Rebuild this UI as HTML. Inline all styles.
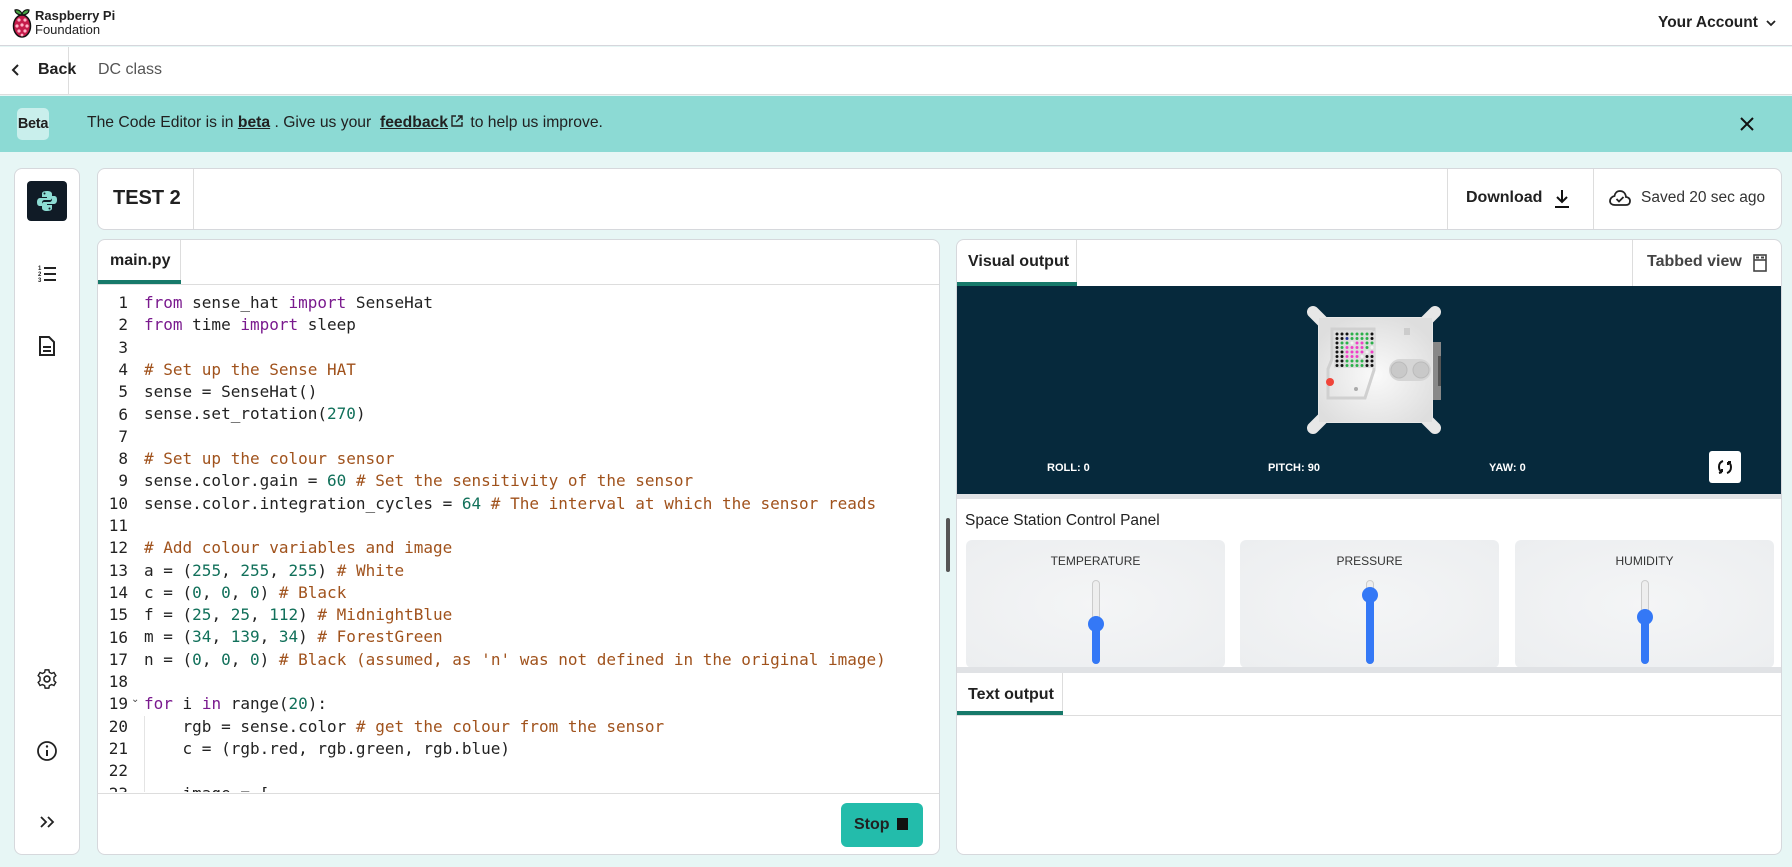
<!DOCTYPE html>
<html><head><meta charset="utf-8"><style>
*{box-sizing:border-box;margin:0;padding:0}
body{width:1792px;height:867px;overflow:hidden;background:#e7f6f5;font-family:"Liberation Sans",sans-serif;color:#212121;position:relative}
.a{position:absolute}
.code{font-family:"DejaVu Sans Mono","Liberation Mono",monospace;font-size:16px;line-height:22.3px;white-space:pre;color:#222}
.k{color:#7a1a8e}.c{color:#a0521c}.n{color:#11705a}
.ln{position:absolute;left:0;width:30px;text-align:right;color:#222}
.card{position:absolute;background:radial-gradient(ellipse at center,#f4f5f6 0%,#eceef0 100%);border-radius:6px;top:300px;height:128px;width:259px}
.card .t{position:absolute;top:14px;width:100%;text-align:center;font-size:12px;color:#333}
.trk{position:absolute;left:50%;margin-left:-4px;top:40px;width:8px;height:84px;border:1px solid #ccc;border-radius:4px;background:#eee}
.fill{position:absolute;left:50%;margin-left:-4px;width:8px;background:#3478f6;border-radius:4px;bottom:4px}
.knob{position:absolute;left:50%;margin-left:-8px;width:16px;height:16px;border-radius:50%;background:#3478f6}
</style></head><body>
<!-- header -->
<div class="a" style="left:0;top:0;width:1792px;height:46px;background:#fff;border-bottom:1px solid #d6d6dc"></div>
<svg class="a" style="left:12px;top:7px" width="20" height="32" viewBox="0 0 20 32">
<path d="M3 3 C6 2 9 4 10 7 C11 4 14 2 17 3 C17 6 14 8 10 8 C6 8 3 6 3 3Z" fill="#47a141" stroke="#111" stroke-width="1.2"/>
<ellipse cx="10" cy="19" rx="8.5" ry="11" fill="#c51a4a" stroke="#111" stroke-width="1.5"/>
<g fill="#ffb3c8"><circle cx="7" cy="13" r="1.6"/><circle cx="13" cy="13" r="1.6"/><circle cx="10" cy="18" r="1.6"/><circle cx="5" cy="19" r="1.6"/><circle cx="15" cy="19" r="1.6"/><circle cx="7" cy="24" r="1.6"/><circle cx="13" cy="24" r="1.6"/><circle cx="10" cy="28" r="1.4"/></g></svg>
<div class="a" style="left:35px;top:9px;font-size:13px;line-height:14px;font-weight:bold">Raspberry Pi</div>
<div class="a" style="left:35px;top:23px;font-size:13px;line-height:14px">Foundation</div>
<div class="a" style="left:1658px;top:14px;font-size:15.5px;font-weight:bold">Your Account</div>
<svg class="a" style="left:1765px;top:18px" width="12" height="10"><path d="M2 3 L6 7 L10 3" stroke="#222" stroke-width="1.8" fill="none"/></svg>
<!-- back bar -->
<div class="a" style="left:0;top:47px;width:1792px;height:48px;background:#fff;border-bottom:1px solid #ddd"></div>
<div class="a" style="left:68px;top:47px;width:1px;height:48px;background:#ddd"></div>
<svg class="a" style="left:10px;top:63px" width="12" height="14"><path d="M8 2 L3 7 L8 12" stroke="#222" stroke-width="2" fill="none"/></svg>
<div class="a" style="left:38px;top:61px;font-size:16px;font-weight:bold">Back</div>
<div class="a" style="left:98px;top:61px;font-size:16px;color:#555">DC class</div>
<!-- banner -->
<div class="a" style="left:0;top:96px;width:1792px;height:56px;background:#8cdad4"></div>
<div class="a" style="left:17px;top:108px;width:32px;height:32px;background:#c9efec;border-radius:5px;font-size:14.5px;font-weight:bold;text-align:center;line-height:32px;letter-spacing:-0.3px">Beta</div>
<div class="a" style="left:87px;top:114px;font-size:15.7px;white-space:nowrap">The Code Editor is in <b style="text-decoration:underline">beta</b> . Give us your &nbsp;<b style="text-decoration:underline">feedback</b><svg width="14" height="14" style="vertical-align:-1px;margin:0 2px"><path d="M6 2H2V12H12V8M8 2H12V6M12 2L6 8" stroke="#222" stroke-width="1.4" fill="none"/></svg> to help us improve.</div>
<svg class="a" style="left:1739px;top:116px" width="16" height="16"><path d="M2 2L14 14M14 2L2 14" stroke="#111" stroke-width="2"/></svg>
<!-- sidebar -->
<div class="a" style="left:14px;top:168px;width:66px;height:687px;background:#fff;border:1px solid #d6d8dc;border-radius:8px"></div>
<div class="a" style="left:27px;top:181px;width:40px;height:40px;background:#101b26;border-radius:4px"></div>
<svg class="a" style="left:35px;top:189px" width="24" height="24" viewBox="0 0 24 24"><path d="M12 2C7 2 7 4 7 5V8H12V9H5C3 9 2 11 2 13C2 16 3 17 5 17H7V14C7 12 8 11 10 11H15C16 11 17 10 17 9V5C17 3 15 2 12 2Z" fill="#8ddcd3"/><path d="M12 22C17 22 17 20 17 19V16H12V15H19C21 15 22 13 22 11C22 8 21 7 19 7H17V10C17 12 16 13 14 13H9C8 13 7 14 7 15V19C7 21 9 22 12 22Z" fill="#8ddcd3"/><circle cx="9.5" cy="4.5" r="1" fill="#101b26"/><circle cx="14.5" cy="19.5" r="1" fill="#101b26"/></svg>
<svg class="a" style="left:37px;top:264px" width="20" height="20"><g fill="#222"><rect x="7" y="3" width="12" height="2"/><rect x="7" y="9" width="12" height="2"/><rect x="7" y="15" width="12" height="2"/></g><g font-family="Liberation Sans" font-size="6" font-weight="bold" fill="#222"><text x="1" y="6">1</text><text x="1" y="12">2</text><text x="1" y="18">3</text></g></svg>
<svg class="a" style="left:38px;top:336px" width="18" height="20"><path d="M2 1H11L16 6V19H2Z" stroke="#222" stroke-width="2" fill="none"/><path d="M5 11H13M5 15H13" stroke="#222" stroke-width="2"/></svg>
<svg class="a" style="left:36px;top:668px" width="22" height="22" viewBox="0 0 24 24"><circle cx="12" cy="12" r="3.2" stroke="#222" stroke-width="1.8" fill="none"/><path d="M10 2H14L14.6 4.8L17 6L19.6 4.9L21.6 8.3L19.6 10.2V13.8L21.6 15.7L19.6 19.1L17 18L14.6 19.2L14 22H10L9.4 19.2L7 18L4.4 19.1L2.4 15.7L4.4 13.8V10.2L2.4 8.3L4.4 4.9L7 6L9.4 4.8Z" stroke="#222" stroke-width="1.6" fill="none"/></svg>
<svg class="a" style="left:36px;top:740px" width="22" height="22"><circle cx="11" cy="11" r="9" stroke="#222" stroke-width="1.8" fill="none"/><path d="M11 10V16" stroke="#222" stroke-width="2"/><circle cx="11" cy="6.5" r="1.2" fill="#222"/></svg>
<svg class="a" style="left:39px;top:815px" width="16" height="14"><path d="M2 2L7 7L2 12M9 2L14 7L9 12" stroke="#222" stroke-width="1.8" fill="none"/></svg>
<!-- title bar -->
<div class="a" style="left:97px;top:168px;width:1685px;height:62px;background:#fff;border:1px solid #d6d8dc;border-radius:8px"></div>
<div class="a" style="left:193px;top:169px;width:1px;height:60px;background:#ddd"></div>
<div class="a" style="left:1447px;top:169px;width:1px;height:60px;background:#ddd"></div>
<div class="a" style="left:1593px;top:169px;width:1px;height:60px;background:#ddd"></div>
<div class="a" style="left:113px;top:187px;font-size:20px;font-weight:bold">TEST 2</div>
<div class="a" style="left:1466px;top:189px;font-size:16px;font-weight:bold">Download</div>
<svg class="a" style="left:1553px;top:189px" width="18" height="20"><path d="M9 1V13M4 8L9 13L14 8M2 18H16" stroke="#111" stroke-width="2" fill="none"/></svg>
<svg class="a" style="left:1609px;top:188px" width="22" height="20" viewBox="0 0 22 20"><path d="M6 17H17C19.5 17 21 15.5 21 13C21 10.5 19 9 17 9C16.5 5 14 3 11 3C8 3 6 5 5.5 8C3 8.5 1 10.5 1 13C1 15.5 3 17 6 17Z" stroke="#222" stroke-width="1.8" fill="none"/><path d="M7.5 11L10 13.5L14.5 9" stroke="#222" stroke-width="1.8" fill="none"/></svg>
<div class="a" style="left:1641px;top:189px;font-size:15.5px;color:#333">Saved 20 sec ago</div>
<!-- editor panel -->
<div class="a" style="left:97px;top:239px;width:843px;height:616px;background:#fff;border:1px solid #d6d8dc;border-radius:8px;overflow:hidden">
 <div class="a" style="left:0;top:0;width:83px;height:44px;border-right:1px solid #ddd"></div>
 <div class="a" style="left:12px;top:12px;font-size:16px;font-weight:bold">main.py</div>
 <div class="a" style="left:0;top:40px;width:83px;height:4px;background:#17796a"></div>
 <div class="a" style="left:0;top:44px;width:843px;height:1px;background:#ddd"></div>
 <div class="a" style="left:0;top:553px;width:843px;height:1px;background:#ddd"></div>
 <div class="a" style="left:743px;top:563px;width:82px;height:44px;background:#23bcab;border-radius:6px;font-size:16px;font-weight:bold;line-height:44px;padding-left:13px">Stop <span style="display:inline-block;width:11px;height:12px;background:#111;vertical-align:-1px;margin-left:3px"></span></div>
 <div class="a" style="left:0;top:52px;width:843px;height:500px;overflow:hidden">
 <div class="code a" style="left:0;top:0;width:843px">
<span class="ln" style="top:0">1</span><span class="ln" style="top:22.3px">2</span><span class="ln" style="top:44.6px">3</span><span class="ln" style="top:66.9px">4</span><span class="ln" style="top:89.2px">5</span><span class="ln" style="top:111.5px">6</span><span class="ln" style="top:133.8px">7</span><span class="ln" style="top:156.1px">8</span><span class="ln" style="top:178.4px">9</span><span class="ln" style="top:200.7px">10</span><span class="ln" style="top:223px">11</span><span class="ln" style="top:245.3px">12</span><span class="ln" style="top:267.6px">13</span><span class="ln" style="top:289.9px">14</span><span class="ln" style="top:312.2px">15</span><span class="ln" style="top:334.5px">16</span><span class="ln" style="top:356.8px">17</span><span class="ln" style="top:379.1px">18</span><span class="ln" style="top:401.4px">19</span><span class="ln" style="top:423.7px">20</span><span class="ln" style="top:446px">21</span><span class="ln" style="top:468.3px">22</span><span class="ln" style="top:490.6px">23</span></div>
 <div class="code a" style="left:46px;top:0"><span class="k">from</span> sense_hat <span class="k">import</span> SenseHat
<span class="k">from</span> time <span class="k">import</span> sleep

<span class="c"># Set up the Sense HAT</span>
sense = SenseHat()
sense.set_rotation(<span class="n">270</span>)

<span class="c"># Set up the colour sensor</span>
sense.color.gain = <span class="n">60</span> <span class="c"># Set the sensitivity of the sensor</span>
sense.color.integration_cycles = <span class="n">64</span> <span class="c"># The interval at which the sensor reads</span>

<span class="c"># Add colour variables and image</span>
a = (<span class="n">255</span>, <span class="n">255</span>, <span class="n">255</span>) <span class="c"># White</span>
c = (<span class="n">0</span>, <span class="n">0</span>, <span class="n">0</span>) <span class="c"># Black</span>
f = (<span class="n">25</span>, <span class="n">25</span>, <span class="n">112</span>) <span class="c"># MidnightBlue</span>
m = (<span class="n">34</span>, <span class="n">139</span>, <span class="n">34</span>) <span class="c"># ForestGreen</span>
n = (<span class="n">0</span>, <span class="n">0</span>, <span class="n">0</span>) <span class="c"># Black (assumed, as 'n' was not defined in the original image)</span>

<span class="k">for</span> i <span class="k">in</span> range(<span class="n">20</span>):
    rgb = sense.color <span class="c"># get the colour from the sensor</span>
    c = (rgb.red, rgb.green, rgb.blue)

    image = [</div>
 <div class="a" style="left:33px;top:402px;font-size:10px;color:#444">⌄</div>
 <div class="a" style="left:46px;top:424px;width:1px;height:80px;background:#e4e4e4"></div>
 </div>
</div>
<div class="a" style="left:946px;top:518px;width:4px;height:54px;background:#555;border-radius:2px"></div>
<!-- output panel -->
<div class="a" style="left:956px;top:239px;width:826px;height:616px;background:#fff;border:1px solid #d6d8dc;border-radius:8px;overflow:hidden">
 <div class="a" style="left:0;top:0;width:120px;height:46px;border-right:1px solid #ddd"></div>
 <div class="a" style="left:11px;top:13px;font-size:16px;font-weight:bold">Visual output</div>
 <div class="a" style="left:0;top:42px;width:120px;height:4px;background:#17796a"></div>
 <div class="a" style="left:675px;top:0;width:1px;height:46px;background:#ddd"></div>
 <div class="a" style="left:690px;top:13px;font-size:16px;font-weight:bold;color:#444">Tabbed view</div>
 <svg class="a" style="left:796px;top:14px" width="14" height="18"><rect x="1" y="1" width="12" height="16" stroke="#444" stroke-width="1.6" fill="none"/><path d="M1 6H13" stroke="#444" stroke-width="1.6"/><rect x="3" y="2.5" width="3" height="2" fill="#444"/><rect x="8" y="2.5" width="3" height="2" fill="#444"/></svg>
 <div class="a" style="left:0;top:46px;width:826px;height:208px;background:#06293c"></div>
 <svg class="a" style="left:349px;top:65px" width="135" height="130" viewBox="1305 304 135 130">
  <g fill="#e7e7e7" stroke="#e7e7e7" stroke-width="12" stroke-linecap="round">
   <path d="M1312 311L1326 325M1434 311L1420 325M1312 427L1326 413M1434 427L1420 413"/>
  </g>
  <rect x="1317" y="316" width="115" height="106" rx="2" fill="#e7e7e7"/>
  <defs><radialGradient id="g" cx="0.5" cy="0.55" r="0.6"><stop offset="0" stop-color="#fafafa"/><stop offset="1" stop-color="#dedede"/></radialGradient></defs>
  <rect x="1318" y="317" width="113" height="104" fill="url(#g)"/>
  <rect x="1432" y="341" width="8" height="58" fill="#888"/><rect x="1437" y="355" width="3" height="30" fill="#555"/>
  <path d="M1331 328H1373V369L1364 397H1327V368L1331 358Z" fill="none" stroke="#d0d0d0" stroke-width="3"/>
  <rect x="1333" y="330" width="41" height="37" fill="#ddd"/>
  <g id="leds"></g>
  <rect x="1403" y="327" width="6" height="7" fill="#ccc"/>
  <rect x="1388" y="358" width="42" height="22" rx="11" fill="#d5d5d5"/>
  <circle cx="1398" cy="369" r="8" fill="#c9c9c9" stroke="#bbb"/><circle cx="1420" cy="369" r="8" fill="#c9c9c9" stroke="#bbb"/>
  <circle cx="1329" cy="381" r="4" fill="#f0453a"/><circle cx="1355" cy="388" r="2" fill="#aaa"/>
 </svg>
 <div class="a" style="left:90px;top:222px;font-size:11px;font-weight:bold;color:#fff">ROLL: 0</div>
 <div class="a" style="left:311px;top:222px;font-size:11px;font-weight:bold;color:#fff">PITCH: 90</div>
 <div class="a" style="left:532px;top:222px;font-size:11px;font-weight:bold;color:#fff">YAW: 0</div>
 <div class="a" style="left:752px;top:211px;width:32px;height:32px;background:#fff;border-radius:3px"></div>
 <svg class="a" style="left:759px;top:218px" width="18" height="18" viewBox="0 0 18 18"><path d="M7 3C4 4 3 6 3 9C3 11 4 13 6 14M11 15C14 14 15 12 15 9C15 7 14 5 12 4M6 14L3 15M6 14V11M12 4H15M12 4V7" stroke="#111" stroke-width="2" fill="none"/></svg>
 <div class="a" style="left:0;top:254px;width:826px;height:5px;background:#e0e2e5"></div>
 <div class="a" style="left:8px;top:272px;font-size:15.5px;color:#222">Space Station Control Panel</div>
 <div class="card" style="left:9px"><div class="t">TEMPERATURE</div><div class="trk"></div><div class="fill" style="top:82px"></div><div class="knob" style="top:76px"></div></div>
 <div class="card" style="left:283px"><div class="t">PRESSURE</div><div class="trk"></div><div class="fill" style="top:52px"></div><div class="knob" style="top:47px"></div></div>
 <div class="card" style="left:558px"><div class="t">HUMIDITY</div><div class="trk"></div><div class="fill" style="top:74px"></div><div class="knob" style="top:69px"></div></div>
 <div class="a" style="left:0;top:427px;width:826px;height:6px;background:#e0e2e5"></div>
 <div class="a" style="left:0;top:433px;width:106px;height:43px;border-right:1px solid #ddd;background:#fff"></div>
 <div class="a" style="left:11px;top:446px;font-size:16px;font-weight:bold">Text output</div>
 <div class="a" style="left:0;top:471px;width:106px;height:4px;background:#17796a"></div>
 <div class="a" style="left:0;top:475px;width:826px;height:1px;background:#ddd"></div>
</div>
<script>
var rows=["kkkggggk","kkbggggk","kggwppgg","kgppppgw","kkppppwp","kkpppwkk","kkggggkk","kkggggkk"];
var col={k:"#111",g:"#2bb04a",b:"#223399",p:"#f03fc8",w:"#f4f4f4"};
var s='';for(var r=0;r<8;r++)for(var c=0;c<8;c++){var ch=rows[r][c]||'k';s+='<circle cx="'+(1336+c*5)+'" cy="'+(333+r*4.5)+'" r="1.5" fill="'+col[ch]+'"/>';}
document.getElementById('leds').innerHTML=s;
</script>
</body></html>
